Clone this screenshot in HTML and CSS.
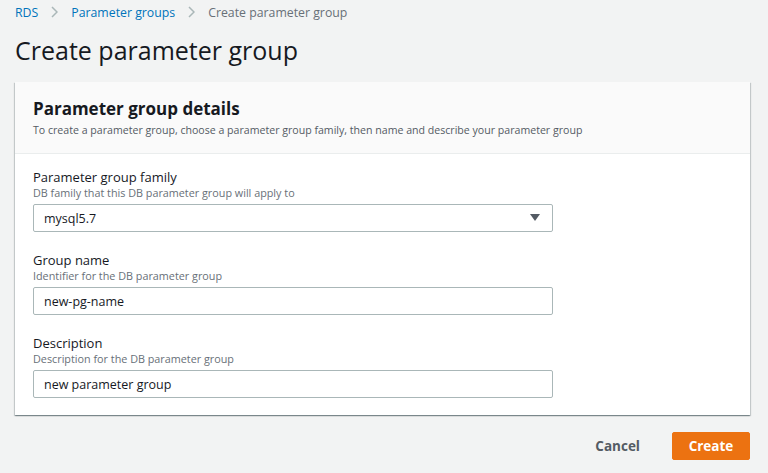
FILE: index.html
```html
<!DOCTYPE html>
<html lang="en">

<head>
    <meta charset="UTF-8">
    <meta name="viewport" content="width=device-width, initial-scale=1.0">
    <title>Create parameter group</title>
    <link rel="stylesheet" href="styles.css">
</head>

<body>
    <div class="page">
        <nav class="breadcrumb">
            <a href="#">RDS</a>
            <svg class="chevron" width="7" height="12" viewBox="0 0 7 12"><path d="M1 1l5 5-5 5" fill="none" stroke="#aab7b8" stroke-width="1.5"/></svg>
            <a href="#">Parameter groups</a>
            <svg class="chevron" width="7" height="12" viewBox="0 0 7 12"><path d="M1 1l5 5-5 5" fill="none" stroke="#aab7b8" stroke-width="1.5"/></svg>
            <span class="current">Create parameter group</span>
        </nav>

        <h1 class="pageTitle">Create parameter group</h1>

        <div class="card">
            <div class="cardHeader">
                <h2>Parameter group details</h2>
                <p>To create a parameter group, choose a parameter group family, then name and describe your parameter group</p>
            </div>
            <div class="cardBody">
                <div class="field">
                    <label class="fieldLabel">Parameter group family</label>
                    <div class="fieldHint">DB family that this DB parameter group will apply to</div>
                    <div class="selectBox">
                        <span>mysql5.7</span>
                        <svg width="10" height="8" viewBox="0 0 10 8"><path d="M0 0h10L5 7z" fill="#545b64"/></svg>
                    </div>
                </div>
                <div class="field">
                    <label class="fieldLabel">Group name</label>
                    <div class="fieldHint">Identifier for the DB parameter group</div>
                    <input class="textInput" type="text" value="new-pg-name">
                </div>
                <div class="field">
                    <label class="fieldLabel">Description</label>
                    <div class="fieldHint">Description for the DB parameter group</div>
                    <input class="textInput" type="text" value="new parameter group">
                </div>
            </div>
        </div>

        <div class="actions">
            <button class="linkButton">Cancel</button>
            <button class="primaryButton">Create</button>
        </div>
    </div>
</body>

</html>
```

FILE: styles.css
```css
body {
    margin: 0;
    font-family: 'Open Sans', sans-serif;
    background-color: #f2f3f3;
    color: #16191f;
}

.page {
    padding: 0 18px 0 15px;
}

.breadcrumb {
    display: flex;
    align-items: center;
    height: 24px;
    font-size: 12.3px;
}

.breadcrumb a {
    color: #0073bb;
    text-decoration: none;
}

.breadcrumb .chevron {
    margin: 0 13px;
}

.breadcrumb .current {
    color: #687078;
}

.pageTitle {
    margin: 8px 0 14px;
    font-size: 25px;
    font-weight: normal;
    line-height: 36px;
}

.card {
    background-color: #fff;
    box-shadow: 0 1px 1px 0 rgba(0, 28, 36, 0.3), 1px 1px 1px 0 rgba(0, 28, 36, 0.15), -1px 1px 1px 0 rgba(0, 28, 36, 0.15);
}

.cardHeader {
    background-color: #fafafa;
    border-bottom: 1px solid #eaeded;
    padding: 16px 18px 15px;
}

.cardHeader h2 {
    margin: 0 0 2px;
    font-size: 17px;
    font-weight: bold;
    line-height: 22px;
}

.cardHeader p {
    margin: 0;
    font-size: 10.6px;
    line-height: 16px;
    color: #545b64;
}

.cardBody {
    padding: 14px 18px 17px;
}

.field + .field {
    margin-top: 19px;
}

.fieldLabel {
    display: block;
    font-size: 13px;
    line-height: 18px;
}

.fieldHint {
    font-size: 10.8px;
    line-height: 14px;
    color: #687078;
    margin-bottom: 4px;
}

.selectBox,
.textInput {
    box-sizing: border-box;
    width: 520px;
    height: 28px;
    border: 1px solid #aab7b8;
    border-radius: 2px;
    background-color: #fff;
    font-family: inherit;
    font-size: 12.5px;
    color: #16191f;
    padding: 0 10px;
}

.selectBox {
    display: flex;
    align-items: center;
    justify-content: space-between;
}

.selectBox svg {
    margin-right: 2px;
}

.textInput {
    display: block;
    outline: none;
}

.actions {
    display: flex;
    justify-content: flex-end;
    align-items: center;
    margin-top: 17px;
}

.linkButton {
    background: none;
    border: none;
    font-family: inherit;
    font-size: 13.5px;
    font-weight: bold;
    color: #545b64;
    padding: 0 20px;
    margin-right: 12px;
    cursor: pointer;
}

.primaryButton {
    background-color: #ec7211;
    color: #fff;
    border: 1px solid #ec7211;
    border-radius: 2px;
    font-family: inherit;
    font-size: 13.5px;
    font-weight: bold;
    height: 28px;
    width: 78px;
    cursor: pointer;
}
```
